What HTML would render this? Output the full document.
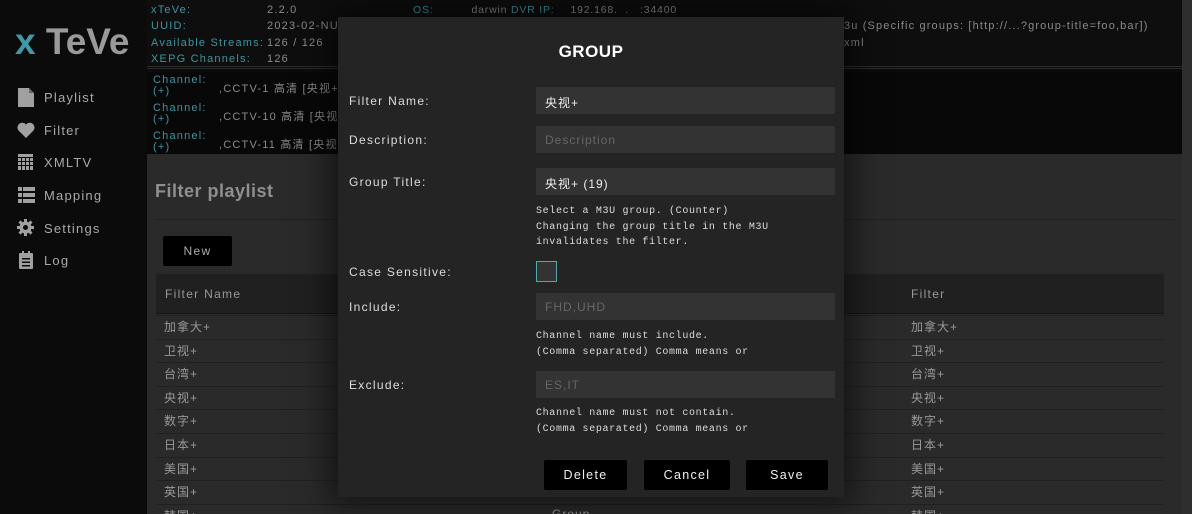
<!DOCTYPE html>
<html style="width:1192px;height:514px;overflow:hidden"><head><meta charset="utf-8"><style>
*{margin:0;padding:0;box-sizing:border-box}
body{width:1192px;height:514px;overflow:hidden;background:#0c0c0c;font-family:"Liberation Sans","Noto Sans CJK SC",sans-serif;position:relative;color:#aaa}
.a{position:absolute;white-space:nowrap}
.sb{left:0;top:0;width:147px;height:514px;background:#0b0b0b}
.nav{left:44px;font-size:13px;letter-spacing:1.2px;color:#a9a9a9}
.ic{left:17px}
.inf{font-size:11px;letter-spacing:1.2px}
.k{color:#3f94a0}
.v{color:#8a8a8a}
.row{left:156px;width:1008px;height:23.6px;border-top:1px solid #202020;font-size:12px;letter-spacing:1px;color:#999;overflow:hidden}
.lab{left:349px;font-size:12px;letter-spacing:1.3px;color:#ddd}
.inp{left:536px;width:299px;height:27px;background:#333;font-size:12px;letter-spacing:1px;padding:7px 9px 0;color:#eee}
.ph{color:#666}
.help{left:536px;font-family:"Liberation Mono",monospace;font-size:10px;line-height:15.5px;color:#ddd;letter-spacing:.65px}
.btn{background:#000;color:#eee;font-size:12.5px;letter-spacing:1.3px;text-align:center;height:30px;line-height:30px;border-radius:2px;top:460px}
</style></head><body>
<div class="a sb"></div>
<div class="a" style="left:15px;top:21px;font-size:37px;font-weight:bold;color:#9a9a9a"><span style="color:#3f9aa5">x</span> TeVe</div>
<svg class="a ic" style="top:88px" width="18" height="19" viewBox="0 0 18 19"><path d="M1 0h11l5 5v14H1z" fill="#a0a0a0"/><path d="M12 0v5h5" fill="#666"/></svg>
<div class="a nav" style="top:90px">Playlist</div>
<svg class="a ic" style="top:122px" width="18" height="16" viewBox="0 0 18 16"><path d="M9 16L1.5 8.5A4.5 4.5 0 0 1 9 2.5a4.5 4.5 0 0 1 7.5 6z" fill="#a0a0a0"/></svg>
<div class="a nav" style="top:123px">Filter</div>
<svg class="a ic" style="top:154px;left:18px" width="15" height="16" viewBox="0 0 15 16"><rect width="15" height="16" fill="#a0a0a0"/><g fill="#0b0b0b"><rect x="0" y="3" width="15" height="1"/><rect x="0" y="7" width="15" height="1"/><rect x="0" y="11" width="15" height="1"/><rect x="3" y="3" width="1" height="13"/><rect x="7" y="3" width="1" height="13"/><rect x="11" y="3" width="1" height="13"/></g></svg>
<div class="a nav" style="top:155px">XMLTV</div>
<svg class="a ic" style="top:187px;left:18px" width="17" height="16" viewBox="0 0 17 16"><g fill="#a0a0a0"><rect width="4" height="4"/><rect x="5" width="12" height="4"/><rect y="6" width="4" height="4"/><rect x="5" y="6" width="12" height="4"/><rect y="12" width="4" height="4"/><rect x="5" y="12" width="12" height="4"/></g></svg>
<div class="a nav" style="top:188px">Mapping</div>
<svg class="a ic" style="top:219px;left:17px" width="17" height="17" viewBox="0 0 17 17"><g fill="#a0a0a0"><circle cx="8.5" cy="8.5" r="6"/><rect x="7" y="0" width="3" height="17"/><rect x="0" y="7" width="17" height="3"/><rect x="7" y="0" width="3" height="17" transform="rotate(45 8.5 8.5)"/><rect x="7" y="0" width="3" height="17" transform="rotate(-45 8.5 8.5)"/></g><circle cx="8.5" cy="8.5" r="2.5" fill="#0b0b0b"/></svg>
<div class="a nav" style="top:221px">Settings</div>
<svg class="a ic" style="top:251px;left:19px" width="14" height="18" viewBox="0 0 14 18"><rect y="2" width="14" height="16" rx="1" fill="#a0a0a0"/><g fill="#0b0b0b"><rect x="3" y="7" width="8" height="1.5"/><rect x="3" y="10.5" width="8" height="1.5"/><rect x="3" y="14" width="8" height="1.5"/></g><rect x="3" y="0" width="2" height="4" fill="#a0a0a0"/><rect x="9" y="0" width="2" height="4" fill="#a0a0a0"/></svg>
<div class="a nav" style="top:253px">Log</div>

<div class="a" style="left:147px;top:0;width:1035px;height:69px;background:#0e0e0e;border-bottom:3px double #2a2a2a"></div>
<div class="a inf k" style="left:151px;top:4px">xTeVe:</div><div class="a inf v" style="left:267px;top:4px">2.2.0</div>
<div class="a inf k" style="left:151px;top:20px">UUID:</div><div class="a inf v" style="left:267px;top:20px">2023-02-NUR</div>
<div class="a inf k" style="left:151px;top:37px">Available Streams:</div><div class="a inf v" style="left:267px;top:37px">126 / 126</div>
<div class="a inf k" style="left:151px;top:53px">XEPG Channels:</div><div class="a inf v" style="left:267px;top:53px">126</div>
<div class="a" style="left:385px;top:4px;font-size:10.5px;letter-spacing:.8px"><span class="k" style="padding-left:28px">OS:</span><span class="v" style="padding-left:38px">darwin</span> <span class="k">DVR IP:</span><span class="v" style="padding-left:16px">192.168.&nbsp;&nbsp;.&nbsp;&nbsp;&nbsp;:34400</span></div>
<div class="a inf v" style="left:844px;top:20px;letter-spacing:1.15px">3u (Specific groups: [http://...?group-title=foo,bar])</div>
<div class="a inf v" style="left:844px;top:37px">xml</div>
<div class="a" style="left:147px;top:72px;width:1035px;height:82px;background:#080808"></div>
<div class="a inf k" style="left:153px;top:75px;line-height:11px">Channel:<br>(+)</div><div class="a inf v" style="left:219px;top:80px">,CCTV-1 高清 [央视+]</div>
<div class="a inf k" style="left:153px;top:103px;line-height:11px">Channel:<br>(+)</div><div class="a inf v" style="left:219px;top:108px">,CCTV-10 高清 [央视+</div>
<div class="a inf k" style="left:153px;top:131px;line-height:11px">Channel:<br>(+)</div><div class="a inf v" style="left:219px;top:136px">,CCTV-11 高清 [央视+</div>

<div class="a" style="left:147px;top:154px;width:1035px;height:360px;background:#2a2a2a"></div>
<div class="a" style="left:1182px;top:0;width:10px;height:514px;background:#2e2e2e"></div>
<div class="a" style="left:155px;top:181px;font-size:18px;font-weight:bold;color:#8f8f8f;letter-spacing:.5px">Filter playlist</div>
<div class="a" style="left:155px;top:219px;width:1020px;height:1px;background:#1f1f1f"></div>
<div class="a" style="left:163px;top:236px;width:69px;height:30px;background:#000;border-radius:2px;color:#aaa;font-size:12px;letter-spacing:1.3px;text-align:center;line-height:30px">New</div>
<div class="a" style="left:156px;top:274px;width:1008px;height:40px;background:#202020;border-bottom:1px solid #151515"></div>
<div class="a" style="left:165px;top:287px;font-size:12px;letter-spacing:1.3px;color:#999">Filter Name</div>
<div class="a" style="left:911px;top:287px;font-size:12px;letter-spacing:1.3px;color:#999">Filter</div>
<div class="a row" style="top:315px"><span class="a" style="left:8px;top:2px">加拿大+</span><span class="a" style="left:755px;top:2px">加拿大+</span></div>
<div class="a row" style="top:338.6px"><span class="a" style="left:8px;top:2px">卫视+</span><span class="a" style="left:755px;top:2px">卫视+</span></div>
<div class="a row" style="top:362.2px"><span class="a" style="left:8px;top:2px">台湾+</span><span class="a" style="left:755px;top:2px">台湾+</span></div>
<div class="a row" style="top:385.8px"><span class="a" style="left:8px;top:2px">央视+</span><span class="a" style="left:755px;top:2px">央视+</span></div>
<div class="a row" style="top:409.4px"><span class="a" style="left:8px;top:2px">数字+</span><span class="a" style="left:755px;top:2px">数字+</span></div>
<div class="a row" style="top:433px"><span class="a" style="left:8px;top:2px">日本+</span><span class="a" style="left:755px;top:2px">日本+</span></div>
<div class="a row" style="top:456.6px"><span class="a" style="left:8px;top:2px">美国+</span><span class="a" style="left:755px;top:2px">美国+</span></div>
<div class="a row" style="top:480.2px"><span class="a" style="left:8px;top:2px">英国+</span><span class="a" style="left:755px;top:2px">英国+</span></div>
<div class="a row" style="top:503.8px;height:10.2px"><span class="a" style="left:8px;top:2px">韩国+</span><span class="a" style="left:396px;top:2px">Group</span><span class="a" style="left:755px;top:2px">韩国+</span></div>

<div class="a" style="left:338px;top:17px;width:506px;height:480px;background:#242424;box-shadow:0 0 30px 8px rgba(0,0,0,.55)"></div>
<div class="a" style="left:338px;top:42px;width:506px;text-align:center;font-size:17px;font-weight:bold;color:#fff;letter-spacing:.5px">GROUP</div>
<div class="a lab" style="top:94px">Filter Name:</div>
<div class="a inp" style="top:87px">央视+</div>
<div class="a lab" style="top:133px">Description:</div>
<div class="a inp ph" style="top:126px">Description</div>
<div class="a lab" style="top:175px">Group Title:</div>
<div class="a inp" style="top:168px">央视+ (19)</div>
<div class="a help" style="top:204px">Select a M3U group. (Counter)<br>Changing the group title in the M3U<br>invalidates the filter.</div>
<div class="a lab" style="top:265px">Case Sensitive:</div>
<div class="a" style="left:536px;top:261px;width:21px;height:21px;background:#333;border:1px solid #5aa6ae"></div>
<div class="a lab" style="top:300px">Include:</div>
<div class="a inp ph" style="top:293px">FHD,UHD</div>
<div class="a help" style="top:329px">Channel name must include.<br>(Comma separated) Comma means or</div>
<div class="a lab" style="top:378px">Exclude:</div>
<div class="a inp ph" style="top:371px">ES,IT</div>
<div class="a help" style="top:406px">Channel name must not contain.<br>(Comma separated) Comma means or</div>
<div class="a btn" style="left:544px;width:83px">Delete</div>
<div class="a btn" style="left:644px;width:86px">Cancel</div>
<div class="a btn" style="left:746px;width:82px">Save</div>
</body></html>
